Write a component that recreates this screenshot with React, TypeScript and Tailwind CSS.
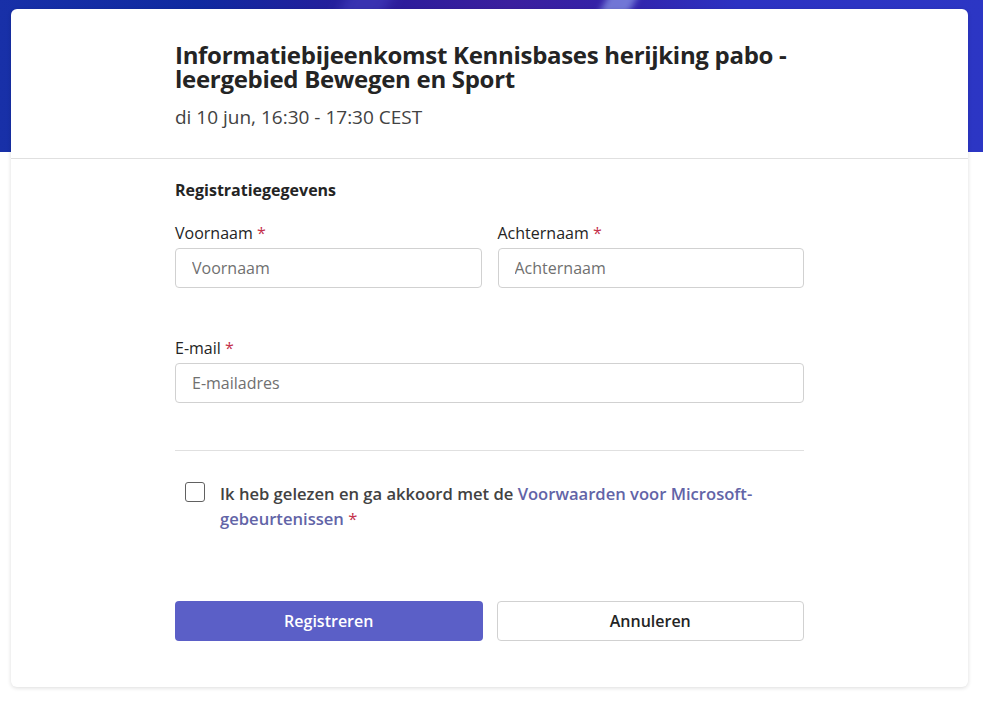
import { useState } from "react";

const font = { fontFamily: '"Open Sans", "Noto Sans", "Liberation Sans", sans-serif' };

function Field({ label, placeholder }: { label: string; placeholder: string }) {
  return (
    <div className="flex flex-col">
      <label className="text-[16px] leading-[22px] text-[#242424] mb-[4px]">
        {label} <span className="text-[#c4314b]">*</span>
      </label>
      <input
        type="text"
        placeholder={placeholder}
        className="h-[40px] w-full rounded-[4px] border border-[#d1d1d1] bg-white px-[16px] text-[16px] text-[#242424] placeholder:text-[#707070] outline-none"
        style={font}
      />
    </div>
  );
}

export default function App() {
  const [agreed, setAgreed] = useState(false);

  return (
    <div className="relative min-h-[708px] w-full bg-white" style={font}>
      {/* banner */}
      <div className="absolute inset-x-0 top-0 h-[152px] overflow-hidden bg-[linear-gradient(90deg,#1830a8_0%,#0f2aa0_20%,#2a1c9a_38%,#3b1f9e_52%,#3422a8_62%,#2c32c2_75%,#2c36c4_100%)]">
        <div className="absolute -top-10 left-[300px] h-[260px] w-[40px] rotate-[28deg] bg-[#4a48c8]/50 blur-[6px]" />
        <div className="absolute -top-10 left-[560px] h-[260px] w-[26px] rotate-[28deg] bg-[#8c9ae8]/70 blur-[3px]" />
      </div>

      <div className="relative pl-[11px] pr-[15px] pt-[9px] pb-[21px]">
        <div className="rounded-[6px] bg-white shadow-[0_1px_4px_rgba(0,0,0,0.14)]">
          <div className="px-[164px] pt-[34px] border-b border-[#e0e0e0] h-[150px]">
            <h1 className="text-[24px] leading-[24px] font-bold text-[#242424] tracking-[-0.3px]">
              Informatiebijeenkomst Kennisbases herijking pabo - leergebied Bewegen en Sport
            </h1>
            <p className="mt-[14px] text-[19px] leading-[24px] text-[#424242]">
              di 10 jun, 16:30 - 17:30 CEST
            </p>
          </div>

          <div className="px-[164px] pt-[20px] pb-[46px]">
            <h2 className="text-[16px] leading-[22px] font-bold text-[#242424]">Registratiegegevens</h2>

            <div className="mt-[21px] grid grid-cols-2 gap-[16px]">
              <Field label="Voornaam" placeholder="Voornaam" />
              <Field label="Achternaam" placeholder="Achternaam" />
            </div>

            <div className="mt-[49px]">
              <Field label="E-mail" placeholder="E-mailadres" />
            </div>

            <div className="mt-[47px] border-t border-[#e0e0e0]" />

            <label className="mt-[30px] flex items-start gap-[15px] pl-[10px] cursor-pointer">
              <span className="mt-[1px] flex h-[20px] w-[20px] shrink-0 items-center justify-center rounded-[3px] border border-[#616161] bg-white">
                <input
                  type="checkbox"
                  checked={agreed}
                  onChange={(e) => setAgreed(e.target.checked)}
                  className="sr-only"
                />
                {agreed && (
                  <svg width="12" height="12" viewBox="0 0 12 12" fill="none">
                    <path d="M2 6.5l2.5 2.5L10 3.5" stroke="#5b5fc7" strokeWidth="1.6" />
                  </svg>
                )}
              </span>
              <span className="flex flex-col text-[16.6px] leading-[25px] font-semibold text-[#424242]">
                <span>
                  Ik heb gelezen en ga akkoord met de{" "}
                  <a className="text-[#6264a7]" href="#">
                    Voorwaarden voor Microsoft-
                  </a>
                </span>
                <span>
                  <a className="text-[#6264a7]" href="#">
                    gebeurtenissen
                  </a>{" "}
                  <span className="text-[#c4314b] font-normal">*</span>
                </span>
              </span>
            </label>

            <div className="mt-[70px] grid grid-cols-2 gap-[14px]">
              <button className="h-[40px] rounded-[4px] bg-[#5b5fc7] text-[16px] font-semibold text-white">
                Registreren
              </button>
              <button className="h-[40px] rounded-[4px] border border-[#d1d1d1] bg-white text-[16px] font-semibold text-[#242424]">
                Annuleren
              </button>
            </div>
          </div>
        </div>
      </div>
    </div>
  );
}
